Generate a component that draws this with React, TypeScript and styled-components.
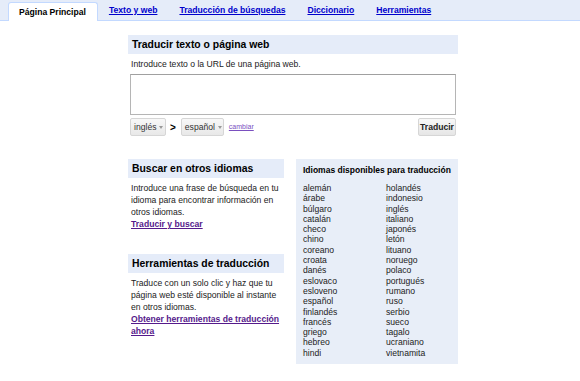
import React from "react";
import styled, { createGlobalStyle } from "styled-components";

const Global = createGlobalStyle`
  html, body { margin: 0; padding: 0; background: #fff; }
  body { font-family: "Liberation Sans", Arial, sans-serif; color: #000; }
`;

const TabBar = styled.div`
  display: flex;
  align-items: flex-end;
  height: 20px;
  background: #e5ecf9;
  border-bottom: 1px solid #c3d9ff;
  padding-left: 8px;
`;

const Tab = styled.a<{ $active?: boolean }>`
  display: block;
  box-sizing: border-box;
  height: ${(p) => (p.$active ? "19px" : "18px")};
  margin-bottom: ${(p) => (p.$active ? "-1px" : "0")};
  padding: ${(p) => (p.$active ? "4px 11px 0 10px" : "3px 11px 0 11px")};
  font-size: 8.6px;
  font-weight: bold;
  color: ${(p) => (p.$active ? "#000" : "#0000cc")};
  text-decoration: ${(p) => (p.$active ? "none" : "underline")};
  background: ${(p) => (p.$active ? "#fff" : "transparent")};
  border: ${(p) => (p.$active ? "1px solid #c3d9ff" : "none")};
  border-bottom: none;
  border-radius: 3px 3px 0 0;
  white-space: nowrap;
`;

const Main = styled.div`
  width: 330px;
  margin: 14px 0 0 128px;
`;

const SectionHeader = styled.div`
  background: #e5ecf9;
  height: 19px;
  padding-left: 4px;
  font-size: 10.4px;
  font-weight: bold;
  line-height: 19px;
  white-space: nowrap;
`;

const Body = styled.div`
  font-size: 8.6px;
  line-height: 12px;
  padding-left: 3px;
  color: #222;
`;

const Intro = styled(Body)`
  margin-top: 4px;
`;

const TextBox = styled.div`
  box-sizing: border-box;
  height: 41px;
  margin: 4px 2px 0 2px;
  border: 1px solid #b5b5b5;
  border-top-color: #a0a0a0;
`;

const Controls = styled.div`
  display: flex;
  align-items: center;
  margin: 3px 2px 0 2px;
  height: 18px;
`;

const Select = styled.div<{ $w: number }>`
  box-sizing: border-box;
  width: ${(p) => p.$w}px;
  height: 18px;
  display: flex;
  align-items: center;
  padding-left: 3px;
  gap: 3px;
  border: 1px solid #d6d6d6;
  border-radius: 2px;
  background: linear-gradient(#f8f8f8, #e8e8e8);
  font-size: 8.6px;
  color: #333;
`;

const Caret = styled.span`
  width: 0;
  height: 0;
  border-left: 2.5px solid transparent;
  border-right: 2.5px solid transparent;
  border-top: 3px solid #999;
`;

const Arrow = styled.span`
  font-size: 10px;
  font-weight: bold;
  margin: 0 5px 0 4px;
`;

const SmallLink = styled.a`
  font-size: 7px;
  color: #7a4fbf;
  text-decoration: underline;
  margin-left: 5px;
  margin-top: -1px;
`;

const Button = styled.div`
  margin-left: auto;
  box-sizing: border-box;
  height: 18px;
  width: 38px;
  display: flex;
  align-items: center;
  justify-content: center;
  border: 1px solid #d6d6d6;
  border-radius: 2px;
  background: linear-gradient(#f8f8f8, #e6e6e6);
  font-size: 8.6px;
  font-weight: bold;
  color: #222;
`;

const Columns = styled.div`
  display: flex;
  gap: 12px;
  margin-top: 23px;
`;

const LeftCol = styled.div`
  width: 156px;
  display: flex;
  flex-direction: column;
`;

const Block = styled.div<{ $gap?: number }>`
  margin-top: ${(p) => p.$gap ?? 0}px;
`;

const BlockText = styled(Body)`
  margin-top: 4px;
`;

const VisitedLink = styled.a`
  display: block;
  font-weight: bold;
  color: #551a8b;
  text-decoration: underline;
`;

const LangBox = styled.div`
  width: 162px;
  box-sizing: border-box;
  background: #e8eef8;
  padding: 5px 7px 6px 7px;
`;

const LangTitle = styled.div`
  font-size: 8.5px;
  font-weight: bold;
  line-height: 12px;
  white-space: nowrap;
`;

const LangGrid = styled.div`
  display: grid;
  grid-template-columns: 83px 1fr;
  grid-auto-flow: column;
  grid-template-rows: repeat(17, 10.3px);
  margin-top: 7px;
  font-size: 8.6px;
  line-height: 10.3px;
  color: #222;
`;

const langs = [
  "alemán", "árabe", "búlgaro", "catalán", "checo", "chino", "coreano", "croata", "danés",
  "eslovaco", "esloveno", "español", "finlandés", "francés", "griego", "hebreo", "hindi",
  "holandés", "indonesio", "inglés", "italiano", "japonés", "letón", "lituano", "noruego",
  "polaco", "portugués", "rumano", "ruso", "serbio", "sueco", "tagalo", "ucraniano", "vietnamita",
];

export default function App() {
  return (
    <>
      <Global />
      <TabBar>
        <Tab $active>Página Principal</Tab>
        <Tab>Texto y web</Tab>
        <Tab>Traducción de búsquedas</Tab>
        <Tab>Diccionario</Tab>
        <Tab>Herramientas</Tab>
      </TabBar>
      <Main>
        <SectionHeader>Traducir texto o página web</SectionHeader>
        <Intro>Introduce texto o la URL de una página web.</Intro>
        <TextBox />
        <Controls>
          <Select $w={36}>inglés<Caret /></Select>
          <Arrow>&gt;</Arrow>
          <Select $w={43}>español<Caret /></Select>
          <SmallLink>cambiar</SmallLink>
          <Button>Traducir</Button>
        </Controls>
        <Columns>
          <LeftCol>
            <Block>
              <SectionHeader>Buscar en otros idiomas</SectionHeader>
              <BlockText>
                Introduce una frase de búsqueda en tu idioma para encontrar información en otros idiomas.
                <VisitedLink>Traducir y buscar</VisitedLink>
              </BlockText>
            </Block>
            <Block $gap={24}>
              <SectionHeader>Herramientas de traducción</SectionHeader>
              <BlockText>
                Traduce con un solo clic y haz que tu página web esté disponible al instante en otros idiomas.
                <VisitedLink>Obtener herramientas de traducción ahora</VisitedLink>
              </BlockText>
            </Block>
          </LeftCol>
          <LangBox>
            <LangTitle>Idiomas disponibles para traducción</LangTitle>
            <LangGrid>
              {langs.map((l) => (
                <span key={l}>{l}</span>
              ))}
            </LangGrid>
          </LangBox>
        </Columns>
      </Main>
    </>
  );
}
